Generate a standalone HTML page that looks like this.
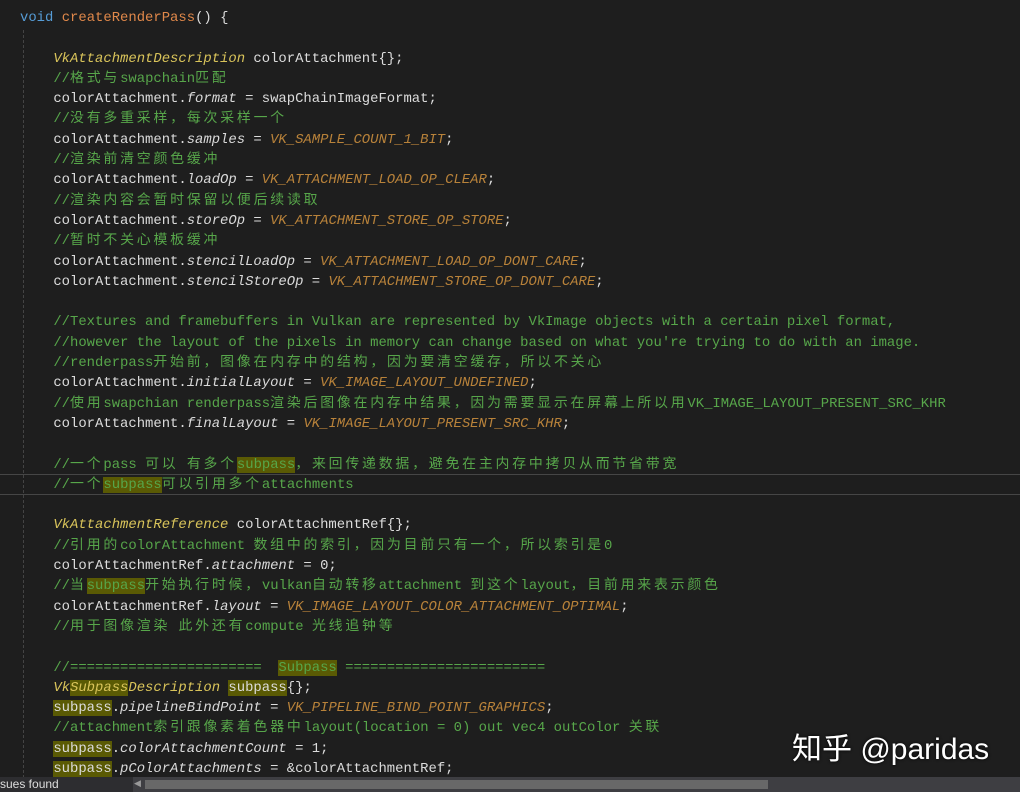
<!DOCTYPE html>
<html><head><meta charset="utf-8"><style>
html,body{margin:0;padding:0;background:#1e1e1e;width:1020px;height:792px;overflow:hidden}
pre{margin:0;position:absolute;left:20px;top:8px;font-family:"Liberation Mono","Noto Sans CJK SC",monospace;font-size:13.9px;line-height:20.3px;color:#dcdcdc}
.c{letter-spacing:2.8px}
.k{color:#569cd6}.f{color:#e0884a}.t{color:#d8c35a;font-style:italic}.m{font-style:italic;color:#dadada}
.e{color:#b8823a;font-style:italic}.g{color:#57a64a}.h{background:#5a5a04}
.guide{position:absolute;left:23px;top:30px;height:748px;border-left:1px dashed #444}
.cur{position:absolute;left:0;top:474px;width:1020px;height:19px;border-top:1px solid #464646;border-bottom:1px solid #464646}
.status{position:absolute;left:0;top:777px;width:1020px;height:15px;background:#3e3e42}
.st{position:absolute;left:0;top:777px;width:133px;height:15px;background:#2d2d30;color:#ddd;font:12px "Liberation Sans",sans-serif;line-height:15px}
.thumb{position:absolute;left:145px;top:780px;width:623px;height:9px;background:#686868}
.arr{position:absolute;left:134px;top:779px;color:#999;font-size:9px;font-family:"DejaVu Sans"}
.wm{position:absolute;left:792px;top:724px;color:#fff;font:30px "Liberation Sans","Noto Sans CJK SC",sans-serif;text-shadow:0 0 3px #000}
</style></head><body>
<div class="guide"></div>
<div class="cur"></div>
<pre><span class="k">void</span> <span class="f">createRenderPass</span>() {

    <span class="t">VkAttachmentDescription</span> colorAttachment{};
    <span class="g">//<span class="c">格式与</span>swapchain<span class="c">匹配</span></span>
    colorAttachment.<span class="m">format</span> = swapChainImageFormat;
    <span class="g">//<span class="c">没有多重采样，每次采样一个</span></span>
    colorAttachment.<span class="m">samples</span> = <span class="e">VK_SAMPLE_COUNT_1_BIT</span>;
    <span class="g">//<span class="c">渲染前清空颜色缓冲</span></span>
    colorAttachment.<span class="m">loadOp</span> = <span class="e">VK_ATTACHMENT_LOAD_OP_CLEAR</span>;
    <span class="g">//<span class="c">渲染内容会暂时保留以便后续读取</span></span>
    colorAttachment.<span class="m">storeOp</span> = <span class="e">VK_ATTACHMENT_STORE_OP_STORE</span>;
    <span class="g">//<span class="c">暂时不关心模板缓冲</span></span>
    colorAttachment.<span class="m">stencilLoadOp</span> = <span class="e">VK_ATTACHMENT_LOAD_OP_DONT_CARE</span>;
    colorAttachment.<span class="m">stencilStoreOp</span> = <span class="e">VK_ATTACHMENT_STORE_OP_DONT_CARE</span>;

    <span class="g">//Textures and framebuffers in Vulkan are represented by VkImage objects with a certain pixel format,</span>
    <span class="g">//however the layout of the pixels in memory can change based on what you're trying to do with an image.</span>
    <span class="g">//renderpass<span class="c">开始前，图像在内存中的结构，因为要清空缓存，所以不关心</span></span>
    colorAttachment.<span class="m">initialLayout</span> = <span class="e">VK_IMAGE_LAYOUT_UNDEFINED</span>;
    <span class="g">//<span class="c">使用</span>swapchian renderpass<span class="c">渲染后图像在内存中结果，因为需要显示在屏幕上所以用</span>VK_IMAGE_LAYOUT_PRESENT_SRC_KHR</span>
    colorAttachment.<span class="m">finalLayout</span> = <span class="e">VK_IMAGE_LAYOUT_PRESENT_SRC_KHR</span>;

    <span class="g">//<span class="c">一个</span>pass <span class="c">可以</span> <span class="c">有多个</span><span class="h">subpass</span><span class="c">，来回传递数据，避免在主内存中拷贝从而节省带宽</span></span>
    <span class="g">//<span class="c">一个</span><span class="h">subpass</span><span class="c">可以引用多个</span>attachments</span>

    <span class="t">VkAttachmentReference</span> colorAttachmentRef{};
    <span class="g">//<span class="c">引用的</span>colorAttachment <span class="c">数组中的索引，因为目前只有一个，所以索引是</span>0</span>
    colorAttachmentRef.<span class="m">attachment</span> = 0;
    <span class="g">//<span class="c">当</span><span class="h">subpass</span><span class="c">开始执行时候，</span>vulkan<span class="c">自动转移</span>attachment <span class="c">到这个</span>layout<span class="c">，目前用来表示颜色</span></span>
    colorAttachmentRef.<span class="m">layout</span> = <span class="e">VK_IMAGE_LAYOUT_COLOR_ATTACHMENT_OPTIMAL</span>;
    <span class="g">//<span class="c">用于图像渲染</span> <span class="c">此外还有</span>compute <span class="c">光线追钟等</span></span>

    <span class="g">//=======================  <span class="h">Subpass</span> ========================</span>
    <span class="t">Vk<span class="h">Subpass</span>Description</span> <span class="h">subpass</span>{};
    <span class="h">subpass</span>.<span class="m">pipelineBindPoint</span> = <span class="e">VK_PIPELINE_BIND_POINT_GRAPHICS</span>;
    <span class="g">//attachment<span class="c">索引跟像素着色器中</span>layout(location = 0) out vec4 outColor <span class="c">关联</span></span>
    <span class="h">subpass</span>.<span class="m">colorAttachmentCount</span> = 1;
    <span class="h">subpass</span>.<span class="m">pColorAttachments</span> = &amp;colorAttachmentRef;
</pre>
<div class="wm">知乎 @paridas</div>
<div class="status"></div>
<div class="st">sues found</div>
<div class="arr">◀</div>
<div class="thumb"></div>
</body></html>
